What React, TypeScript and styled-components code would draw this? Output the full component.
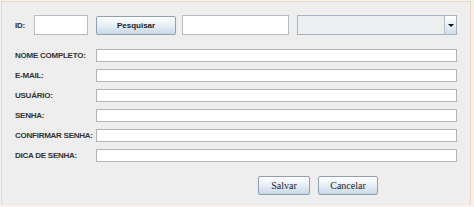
import {Fragment} from "react";
import styled, {createGlobalStyle} from "styled-components";

const GlobalStyle = createGlobalStyle`
    html, body {
        margin: 0;
        padding: 0;
        background: #f6f1ea;
    }
`

const StyledFrameDiv = styled.div`
    box-sizing: border-box;
    width: 470px;
    height: 204px;
    margin: 1px 0 0 1px;
    border: 1px solid #e8d9c3;
    border-bottom-color: #efe7dc;
    background: #eeeeee;
    padding: 13px 13px 0 13px;
    display: flex;
    flex-direction: column;
    font-family: "Liberation Sans", Arial, sans-serif;
`

const StyledTopRowDiv = styled.div`
    display: flex;
    align-items: center;
    height: 20px;
`

const StyledLabel = styled.label`
    font-size: 8px;
    font-weight: bold;
    letter-spacing: -0.25px;
    color: #333;
    white-space: nowrap;
`

const StyledInput = styled.input<{ $w?: number }>`
    box-sizing: border-box;
    width: ${p => p.$w ? `${p.$w}px` : "100%"};
    height: 20px;
    margin: 0;
    padding: 0 3px;
    border: 1px solid #b5bcc6;
    background: #ffffff;
    outline: none;
`

const StyledButton = styled.button<{ $serif?: boolean }>`
    box-sizing: border-box;
    height: 19px;
    margin: 0;
    padding: 0;
    border: 1px solid #8fa0b5;
    border-radius: 2px;
    background: linear-gradient(#ffffff 0%, #e9f0f7 45%, #c9d8e8 100%);
    color: #222;
    font-family: ${p => p.$serif ? `"Liberation Serif", "Times New Roman", serif` : `"Liberation Sans", Arial, sans-serif`};
    font-size: ${p => p.$serif ? "10px" : "8px"};
    font-weight: ${p => p.$serif ? "normal" : "bold"};
`

const StyledComboDiv = styled.div`
    box-sizing: border-box;
    width: 161px;
    height: 20px;
    margin-left: 8px;
    display: flex;
    border: 1px solid #a9b3c0;
    background: #eceef0;
`

const StyledComboArrow = styled.div`
    box-sizing: border-box;
    margin-left: auto;
    width: 12px;
    height: 100%;
    border-left: 1px solid #b3bfcd;
    background: linear-gradient(#ffffff, #d2deea);
    display: flex;
    align-items: center;
    justify-content: center;

    &::after {
        content: "";
        border-left: 3px solid transparent;
        border-right: 3px solid transparent;
        border-top: 3px solid #111;
    }
`

const StyledFormGrid = styled.div`
    display: grid;
    grid-template-columns: 81px 1fr;
    row-gap: 7px;
    align-items: center;
    margin-top: 14px;

    & > input {
        height: 13px;
        border-color: #b4b4b4;
    }
`

const StyledButtonRowDiv = styled.div`
    display: flex;
    gap: 8px;
    margin-top: 14px;
    padding-left: 243px;
`

const fields = [
    "NOME COMPLETO:",
    "E-MAIL:",
    "USUÁRIO:",
    "SENHA:",
    "CONFIRMAR SENHA:",
    "DICA DE SENHA:",
]

export default function App() {
    return <>
        <GlobalStyle/>
        <StyledFrameDiv>
            <StyledTopRowDiv>
                <StyledLabel style={{width: 19}}>ID:</StyledLabel>
                <StyledInput $w={54}/>
                <StyledButton style={{width: 81, marginLeft: 8}}>Pesquisar</StyledButton>
                <StyledInput $w={107} style={{marginLeft: 6}}/>
                <StyledComboDiv>
                    <StyledComboArrow/>
                </StyledComboDiv>
            </StyledTopRowDiv>

            <StyledFormGrid>
                {
                    fields.map(f => <Fragment key={f}>
                        <StyledLabel>{f}</StyledLabel>
                        <StyledInput/>
                    </Fragment>)
                }
            </StyledFormGrid>

            <StyledButtonRowDiv>
                <StyledButton $serif style={{width: 52}}>Salvar</StyledButton>
                <StyledButton $serif style={{width: 60}}>Cancelar</StyledButton>
            </StyledButtonRowDiv>
        </StyledFrameDiv>
    </>
}
